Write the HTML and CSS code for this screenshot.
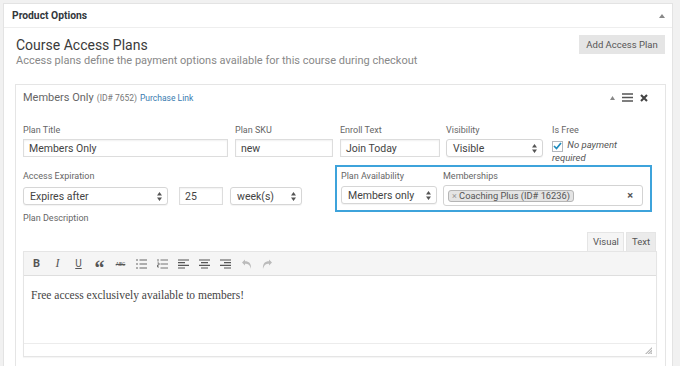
FILE: index.html
```html
<!DOCTYPE html>
<html lang="en">
<head>
<meta charset="UTF-8">
<title>Product Options</title>
<link rel="stylesheet" href="styles.css">
</head>
<body>

<div class="postbox">
  <div class="postbox-head">
    <h2>Product Options</h2>
    <svg class="toggle" width="6" height="4" viewBox="0 0 6 4"><path d="M0 4 L3 0 L6 4 Z" fill="#888"/></svg>
  </div>

  <div class="postbox-inside">
    <div class="plans-head">
      <div>
        <h3>Course Access Plans</h3>
        <p>Access plans define the payment options available for this course during checkout</p>
      </div>
      <button class="btn">Add Access Plan</button>
    </div>

    <div class="plan">
      <div class="plan-head">
        <span class="plan-name">Members Only</span>
        <span class="plan-id">(ID# 7652)</span>
        <a class="plan-link" href="#">Purchase Link</a>
        <div class="plan-actions">
          <svg width="5" height="4" viewBox="0 0 5 4"><path d="M0 4 L2.5 0 L5 4 Z" fill="#888"/></svg>
          <svg width="11" height="9" viewBox="0 0 11 9"><path d="M0 1 H11 M0 4.5 H11 M0 8 H11" stroke="#555" stroke-width="1.5"/></svg>
          <svg width="8" height="8" viewBox="0 0 8 8"><path d="M1 1 L7 7 M7 1 L1 7" stroke="#444" stroke-width="2.1"/></svg>
        </div>
      </div>

      <div class="row row-1">
        <div class="field w-title">
          <div class="label">Plan Title</div>
          <div class="input">Members Only</div>
        </div>
        <div class="field w-sku">
          <div class="label">Plan SKU</div>
          <div class="input">new</div>
        </div>
        <div class="field w-enroll">
          <div class="label">Enroll Text</div>
          <div class="input">Join Today</div>
        </div>
        <div class="field w-vis">
          <div class="label">Visibility</div>
          <div class="select">Visible
            <svg width="5" height="9" viewBox="0 0 5 9"><path d="M0 3.5 L2.5 0 L5 3.5 Z M0 5.5 L2.5 9 L5 5.5 Z" fill="#555"/></svg>
          </div>
        </div>
        <div class="field w-free">
          <div class="label">Is Free</div>
          <div class="free"><span class="checkbox"><svg width="9" height="8" viewBox="0 0 9 8"><path d="M1 4 L3.5 6.5 L8 1" fill="none" stroke="#1e8cbe" stroke-width="1.7"/></svg></span> No payment required</div>
        </div>
      </div>

      <div class="row row-2">
        <div class="field w-exp">
          <div class="label">Access Expiration</div>
          <div class="select">Expires after
            <svg width="5" height="9" viewBox="0 0 5 9"><path d="M0 3.5 L2.5 0 L5 3.5 Z M0 5.5 L2.5 9 L5 5.5 Z" fill="#555"/></svg>
          </div>
        </div>
        <div class="field w-len">
          <div class="label">&nbsp;</div>
          <div class="input">25</div>
        </div>
        <div class="field w-period">
          <div class="label">&nbsp;</div>
          <div class="select">week(s)
            <svg width="5" height="9" viewBox="0 0 5 9"><path d="M0 3.5 L2.5 0 L5 3.5 Z M0 5.5 L2.5 9 L5 5.5 Z" fill="#555"/></svg>
          </div>
        </div>

        <div class="highlight">
          <div class="field w-avail">
            <div class="label">Plan Availability</div>
            <div class="select">Members only
              <svg width="5" height="9" viewBox="0 0 5 9"><path d="M0 3.5 L2.5 0 L5 3.5 Z M0 5.5 L2.5 9 L5 5.5 Z" fill="#555"/></svg>
            </div>
          </div>
          <div class="field w-members">
            <div class="label">Memberships</div>
            <div class="multi">
              <span class="tag"><span class="tag-x">×</span> Coaching Plus (ID# 16236)</span>
              <span class="clear">×</span>
            </div>
          </div>
        </div>
      </div>

      <div class="label desc-label">Plan Description</div>

      <div class="editor">
        <div class="tabs">
          <span class="tab active">Visual</span>
          <span class="tab">Text</span>
        </div>
        <div class="editor-box">
          <div class="toolbar">
            <span class="tool t-b">B</span>
            <span class="tool t-i">I</span>
            <span class="tool t-u">U</span>
            <span class="tool t-q">“</span>
            <span class="tool t-abc">ABC</span>
            <svg class="tool" width="11" height="10" viewBox="0 0 11 10"><path d="M0 1 H2 M0 5 H2 M0 9 H2 M3.5 1 H11 M3.5 5 H11 M3.5 9 H11" stroke="#666" stroke-width="1.2"/></svg>
            <svg class="tool" width="11" height="10" viewBox="0 0 11 10"><path d="M1 0 V2.5 M0.5 4 H2 V6 H0.5 V8 H2 M3.5 1 H11 M3.5 5 H11 M3.5 9 H11" stroke="#666" stroke-width="0.9" fill="none"/></svg>
            <svg class="tool" width="11" height="10" viewBox="0 0 11 10"><path d="M0 1 H11 M0 3.7 H7 M0 6.3 H11 M0 9 H7" stroke="#555" stroke-width="1.2"/></svg>
            <svg class="tool" width="11" height="10" viewBox="0 0 11 10"><path d="M0 1 H11 M2 3.7 H9 M0 6.3 H11 M2 9 H9" stroke="#555" stroke-width="1.2"/></svg>
            <svg class="tool" width="11" height="10" viewBox="0 0 11 10"><path d="M0 1 H11 M4 3.7 H11 M0 6.3 H11 M4 9 H11" stroke="#555" stroke-width="1.2"/></svg>
            <svg class="tool" width="11" height="10" viewBox="0 0 11 10"><path d="M1 3.5 L4 0.5 V2.2 C8 2.2 10.5 4.5 10 10 C9 6 7 4.8 4 4.8 V6.5 Z" fill="#bbb"/></svg>
            <svg class="tool" width="11" height="10" viewBox="0 0 11 10"><path d="M10 3.5 L7 0.5 V2.2 C3 2.2 0.5 4.5 1 10 C2 6 4 4.8 7 4.8 V6.5 Z" fill="#bbb"/></svg>
          </div>
          <div class="content">Free access exclusively available to members!</div>
          <div class="statusbar">
            <svg width="7" height="7" viewBox="0 0 7 7"><path d="M7 0 V7 H0 Z" fill="#bbb"/><path d="M7 2 L2 7 M7 4.5 L4.5 7" stroke="#fff" stroke-width="0.8"/></svg>
          </div>
        </div>
      </div>
    </div>
  </div>
</div>

</body>
</html>
```

FILE: styles.css
```css
* {
  box-sizing: border-box;
}

body {
  margin: 0;
  height: 366px;
  overflow: hidden;
  background-color: #f1f1f1;
  font-family: Roboto, "Liberation Sans", Arial, sans-serif;
  color: #444;
}

.postbox {
  margin: 3px 0 0 3px;
  width: 670px;
  min-height: 420px;
  background-color: #fff;
  border: 1px solid #e3e3e3;
}

.postbox-head {
  height: 24px;
  display: flex;
  align-items: center;
  justify-content: space-between;
  padding: 0 7px 0 8px;
  border-bottom: 1px solid #eee;
}

.postbox-head h2 {
  margin: 0;
  font-size: 10.3px;
  font-weight: 700;
  color: #32373c;
}

.postbox-inside {
  padding: 0 6px 0 11px;
}

.plans-head {
  display: flex;
  justify-content: space-between;
  align-items: flex-start;
  padding-top: 8px;
}

.plans-head h3 {
  margin: 0;
  padding-left: 1px;
  font-size: 14px;
  font-weight: 400;
  line-height: 18px;
  color: #3a3a3a;
}

.plans-head p {
  margin: 0;
  padding-left: 1px;
  font-size: 11px;
  line-height: 14px;
  color: #888;
}

.btn {
  margin: -1px 1px 0 0;
  width: 86px;
  height: 19px;
  padding: 0;
  border: 0;
  background-color: #e5e5e5;
  color: #555;
  font-family: inherit;
  font-size: 9.5px;
}

/* access plan card */
.plan {
  margin-top: 16px;
  border: 1px solid #e5e5e5;
  padding: 0 8px 30px 7px;
}

.plan-head {
  height: 25px;
  display: flex;
  align-items: center;
}

.plan-name {
  font-size: 11px;
  color: #666;
}

.plan-id {
  margin-left: 3px;
  font-size: 8.5px;
  color: #777;
}

.plan-link {
  margin-left: 3px;
  font-size: 8.5px;
  color: #3a7bb0;
  text-decoration: none;
}

.plan-actions {
  margin-left: auto;
  margin-right: 9px;
  display: flex;
  align-items: center;
  gap: 7px;
}

.row {
  display: flex;
  align-items: flex-start;
}

.row-1 {
  margin-top: 14px;
  height: 39px;
}

.row-2 {
  margin-top: 2px;
}

.field {
  flex: none;
}

.label {
  height: 12px;
  line-height: 12px;
  font-size: 9px;
  color: #666;
}

.input,
.select {
  margin-top: 3px;
  height: 18px;
  padding: 0 5px;
  display: flex;
  align-items: center;
  font-size: 10.5px;
  color: #444;
  background-color: #fff;
  border: 1px solid #ddd;
  box-shadow: inset 0 1px 2px rgba(0, 0, 0, 0.06);
}

.select {
  justify-content: space-between;
  padding: 0 5px 0 6px;
  border-radius: 3px;
  border-color: #d6d6d6;
  box-shadow: 0 1px 1px rgba(0, 0, 0, 0.05);
}

.w-title { width: 205px; margin-right: 7px; }
.w-sku { width: 98px; margin-right: 7px; }
.w-enroll { width: 100px; margin-right: 6px; }
.w-vis { width: 97px; margin-right: 9px; }
.w-free { width: 80px; }

.free {
  margin-top: 3px;
  font-size: 9.5px;
  line-height: 12px;
  font-style: italic;
  color: #555;
}

.checkbox {
  display: inline-flex;
  align-items: center;
  justify-content: center;
  width: 11px;
  height: 11px;
  margin-right: 2px;
  vertical-align: -2px;
  border: 1px solid #b4b9be;
  background-color: #fff;
}

.row-2 > .field {
  padding-top: 5px;
}

.row-2 .input,
.row-2 .select {
  margin-top: 5px;
}

.w-exp { width: 145px; margin-right: 11px; }
.w-len { width: 44px; margin-right: 7px; }
.w-period { width: 72px; }

.highlight {
  margin-left: 33px;
  width: 317px;
  display: flex;
  padding: 3px 7px 4px 4px;
  border: 2px solid #3ea3db;
}

.w-avail { width: 96px; margin-right: 6px; }
.w-members { width: 200px; }

.highlight .select {
  margin-top: 4px;
}

.multi {
  margin-top: 3px;
  height: 21px;
  padding: 0 9px 0 4px;
  display: flex;
  align-items: center;
  justify-content: space-between;
  border: 1px solid #d3d3d3;
  border-radius: 3px;
  background-color: #fff;
}

.tag {
  height: 12px;
  line-height: 10px;
  padding: 0 3px;
  font-size: 9.3px;
  color: #555;
  background-color: #e4e4e4;
  border: 1px solid #b5b5b5;
  border-radius: 3px;
}

.tag-x {
  color: #999;
  font-size: 9px;
}

.clear {
  font-size: 11px;
  font-weight: 700;
  color: #555;
}

/* editor */
.editor {
  margin-top: 8px;
  width: 634px;
}

.tabs {
  display: flex;
  justify-content: flex-end;
  gap: 2px;
  padding-right: 1px;
}

.tab {
  height: 19px;
  line-height: 18px;
  padding: 0 5px;
  font-size: 9.5px;
  color: #555;
  background-color: #ebebeb;
  border: 1px solid #e5e5e5;
  border-bottom: 0;
}

.tab.active {
  width: 37px;
  background-color: #f5f5f5;
}

.editor-box {
  border: 1px solid #e5e5e5;
  box-shadow: 0 1px 1px rgba(0, 0, 0, 0.04);
}

.toolbar {
  height: 24px;
  display: flex;
  align-items: center;
  gap: 10px;
  padding-left: 7px;
  background-color: #f5f5f5;
  border-bottom: 1px solid #dedede;
}

.tool {
  width: 11px;
  text-align: center;
  flex: none;
  color: #555;
  font-size: 11px;
}

.t-b {
  font-weight: 700;
}

.t-i {
  font-family: "Liberation Serif", serif;
  font-style: italic;
  font-size: 12px;
}

.t-u {
  text-decoration: underline;
  font-size: 10px;
}

.t-q {
  font-family: "Liberation Serif", serif;
  font-weight: 700;
  font-size: 20px;
  height: 10px;
  line-height: 18px;
}

.t-abc {
  font-size: 5px;
  text-decoration: line-through;
}

.content {
  height: 67px;
  padding: 13px 7px 0;
  font-family: "Liberation Serif", Georgia, serif;
  font-size: 11.5px;
  color: #444;
}

.statusbar {
  height: 13px;
  display: flex;
  justify-content: flex-end;
  align-items: flex-end;
  padding: 0 4px 2px 0;
  border-top: 1px solid #ececec;
}
```
